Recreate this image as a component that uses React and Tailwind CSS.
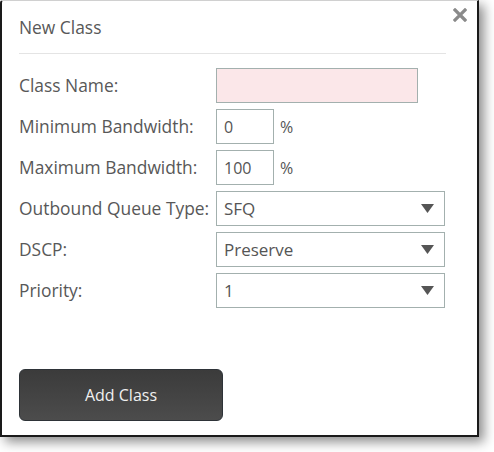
import React from "react";

const labelCls = "w-[197px] shrink-0 text-[17.4px] text-[#585858]";
const boxCls =
  "h-full border border-[#a3b0ae] text-[16px] text-[#555555] px-[7px] flex items-center";

const Arrow = () => (
  <svg width="13" height="9" viewBox="0 0 13 9" className="shrink-0">
    <polygon points="0,0 13,0 6.5,9" fill="#555555" />
  </svg>
);

const SelectBox = ({ value }) => (
  <div className={`${boxCls} bg-white w-[229px] justify-between pr-[10px]`}>
    <span className="text-[17px]">{value}</span>
    <Arrow />
  </div>
);

const App = () => {
  return (
    <div
      className="w-[494px] h-[452px] bg-white overflow-hidden"
      style={{ fontFamily: '"Open Sans", "Noto Sans", sans-serif' }}
    >
      <div className="relative w-[479px] h-[437px] bg-white border-l-2 border-r-2 border-b-2 border-t border-l-[#1a1a1a] border-r-[#1a1a1a] border-b-[#1a1a1a] border-t-[#d0d0d0] rounded-tl-[3px] shadow-[5px_5px_12px_rgba(0,0,0,0.45)] pl-[17px] pr-[31px]">
        <svg
          width="14"
          height="14"
          viewBox="0 0 14 14"
          className="absolute left-[451px] top-[7px]"
        >
          <path d="M2 2 L12 12 M12 2 L2 12" stroke="#8a8a8a" strokeWidth="3.2" strokeLinecap="square" />
        </svg>
        <div className="pt-[14px] pb-[14px] border-b border-[#e4e4e4] text-[17.4px] leading-[24px] text-[#585858]">
          New Class
        </div>
        <div className="flex flex-col gap-[6px] mt-[14px]">
          <div className="flex items-center h-[35px]">
            <div className={labelCls}>Class Name:</div>
            <div className={`${boxCls} w-[202px] bg-[#fbe7e9]`} />
          </div>
          <div className="flex items-center h-[35px]">
            <div className={labelCls}>Minimum Bandwidth:</div>
            <div className={`${boxCls} bg-white w-[58px]`}>0</div>
            <span className="ml-[6px] text-[16px] text-[#555555]">%</span>
          </div>
          <div className="flex items-center h-[35px]">
            <div className={labelCls}>Maximum Bandwidth:</div>
            <div className={`${boxCls} bg-white w-[58px]`}>100</div>
            <span className="ml-[6px] text-[16px] text-[#555555]">%</span>
          </div>
          <div className="flex items-center h-[35px]">
            <div className={labelCls}>Outbound Queue Type:</div>
            <SelectBox value="SFQ" />
          </div>
          <div className="flex items-center h-[35px]">
            <div className={labelCls}>DSCP:</div>
            <SelectBox value="Preserve" />
          </div>
          <div className="flex items-center h-[35px]">
            <div className={labelCls}>Priority:</div>
            <SelectBox value="1" />
          </div>
        </div>
        <button className="mt-[61px] w-[204px] h-[52px] rounded-[6px] border border-[#2e3338] bg-gradient-to-b from-[#3b3b3b] to-[#4c4c4c] text-[16px] text-[#f0f0f0] flex items-center justify-center">
          Add Class
        </button>
      </div>
    </div>
  );
};

export default App;
